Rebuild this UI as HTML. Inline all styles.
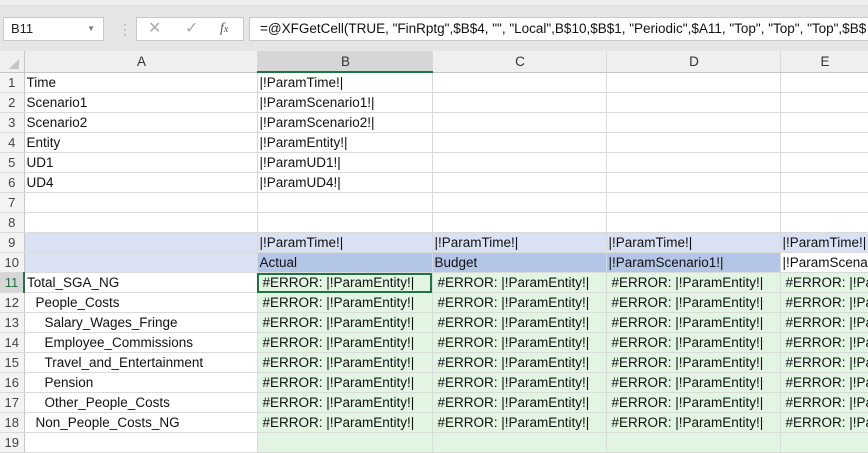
<!DOCTYPE html>
<html><head><meta charset="utf-8"><style>
*{margin:0;padding:0;box-sizing:border-box}
body{width:868px;height:437px;overflow:hidden;background:#fff;font-family:"Liberation Sans",Calibri,sans-serif;position:relative}
.top{position:absolute;left:0;top:0;width:868px;height:51px;background:#e6e6e6}
.strip{position:absolute;left:0;top:0;width:868px;height:6px;background:#f0f0f0;border-bottom:1px solid #dcdcdc}
.box{position:absolute;background:#fff;border:1px solid #c8c8c8;top:17px;height:24px;font-size:13px;line-height:22px;color:#222;overflow:hidden;white-space:nowrap}
table{position:absolute;left:0;top:51px;border-collapse:collapse;table-layout:fixed;width:868px}
td{height:20px;border-right:1px solid #dadada;border-bottom:1px solid #dadada;font-size:13.5px;white-space:nowrap;overflow:hidden;padding:0 0 0 2px;color:#111;line-height:19px}
td.rh{background:#f3f3f3;color:#444;text-align:center;padding:0;font-size:13px;border-right:1px solid #c6c6c6}
tr.ch td{background:#efefef;text-align:center;color:#333;height:21px;border-bottom:1px solid #c6c6c6}
tr.ch td.sel{background:#d6d6d6;border-bottom:2px solid #217346}
td.rsel{background:#d6d6d6;color:#217346;border-right:2px solid #217346}
.l{background:#d9e1f2}
.d{background:#b4c6e7}
.g{background:#e2f5e2;padding-left:5px}
.cur{outline:2px solid #217346;outline-offset:-2px}
</style></head><body>
<div class="top"><div class="strip"></div>
<div class="box" style="left:3px;width:101px;padding-left:7px">B11<span style="position:absolute;right:8px;top:0;font-size:8px;color:#777">▼</span></div>
<div style="position:absolute;left:118px;top:21px;color:#aaa;font-size:14px">⋮</div>
<div class="box" style="left:136px;width:108px;color:#aaa;font-size:16px"><span style="position:absolute;left:11px">✕</span><span style="position:absolute;left:48px">✓</span><span style="position:absolute;left:83px;font-family:'Liberation Serif',serif;font-style:italic;color:#555;font-size:14px">f<small style="font-size:10px">x</small></span></div>
<div class="box" style="left:249px;width:640px;padding-left:10px;font-size:13.5px;color:#111">=@XFGetCell(TRUE, "FinRptg",$B$4, "", "Local",B$10,$B$1, "Periodic",$A11, "Top", "Top", "Top",$B$</div>
</div>
<table>
<colgroup><col style="width:24px"><col style="width:233px"><col style="width:175px"><col style="width:174px"><col style="width:174px"><col style="width:88px"></colgroup>
<tr class="ch"><td class="rh" style="background:#efefef"><span style="display:block;width:0;height:0;border-left:10px solid transparent;border-bottom:10px solid #c4c4c4;margin:6px 0 0 9px"></span></td><td>A</td><td class="sel">B</td><td>C</td><td>D</td><td>E</td></tr>
<tr><td class="rh">1</td><td>Time</td><td>|!ParamTime!|</td><td></td><td></td><td></td></tr>
<tr><td class="rh">2</td><td>Scenario1</td><td>|!ParamScenario1!|</td><td></td><td></td><td></td></tr>
<tr><td class="rh">3</td><td>Scenario2</td><td>|!ParamScenario2!|</td><td></td><td></td><td></td></tr>
<tr><td class="rh">4</td><td>Entity</td><td>|!ParamEntity!|</td><td></td><td></td><td></td></tr>
<tr><td class="rh">5</td><td>UD1</td><td>|!ParamUD1!|</td><td></td><td></td><td></td></tr>
<tr><td class="rh">6</td><td>UD4</td><td>|!ParamUD4!|</td><td></td><td></td><td></td></tr>
<tr><td class="rh">7</td><td></td><td></td><td></td><td></td><td></td></tr>
<tr><td class="rh">8</td><td></td><td></td><td></td><td></td><td></td></tr>
<tr><td class="rh">9</td><td class="l"></td><td class="l">|!ParamTime!|</td><td class="l">|!ParamTime!|</td><td class="l">|!ParamTime!|</td><td class="l">|!ParamTime!|</td></tr>
<tr><td class="rh">10</td><td class="l"></td><td class="d">Actual</td><td class="d">Budget</td><td class="d">|!ParamScenario1!|</td><td>|!ParamScenario1!|</td></tr>
<tr><td class="rh rsel">11</td><td>Total_SGA_NG</td><td class="g cur">#ERROR: |!ParamEntity!|</td><td class="g">#ERROR: |!ParamEntity!|</td><td class="g">#ERROR: |!ParamEntity!|</td><td class="g">#ERROR: |!ParamEntity!|</td></tr>
<tr><td class="rh">12</td><td style="padding-left:11px">People_Costs</td><td class="g">#ERROR: |!ParamEntity!|</td><td class="g">#ERROR: |!ParamEntity!|</td><td class="g">#ERROR: |!ParamEntity!|</td><td class="g">#ERROR: |!ParamEntity!|</td></tr>
<tr><td class="rh">13</td><td style="padding-left:20px">Salary_Wages_Fringe</td><td class="g">#ERROR: |!ParamEntity!|</td><td class="g">#ERROR: |!ParamEntity!|</td><td class="g">#ERROR: |!ParamEntity!|</td><td class="g">#ERROR: |!ParamEntity!|</td></tr>
<tr><td class="rh">14</td><td style="padding-left:20px">Employee_Commissions</td><td class="g">#ERROR: |!ParamEntity!|</td><td class="g">#ERROR: |!ParamEntity!|</td><td class="g">#ERROR: |!ParamEntity!|</td><td class="g">#ERROR: |!ParamEntity!|</td></tr>
<tr><td class="rh">15</td><td style="padding-left:20px">Travel_and_Entertainment</td><td class="g">#ERROR: |!ParamEntity!|</td><td class="g">#ERROR: |!ParamEntity!|</td><td class="g">#ERROR: |!ParamEntity!|</td><td class="g">#ERROR: |!ParamEntity!|</td></tr>
<tr><td class="rh">16</td><td style="padding-left:20px">Pension</td><td class="g">#ERROR: |!ParamEntity!|</td><td class="g">#ERROR: |!ParamEntity!|</td><td class="g">#ERROR: |!ParamEntity!|</td><td class="g">#ERROR: |!ParamEntity!|</td></tr>
<tr><td class="rh">17</td><td style="padding-left:20px">Other_People_Costs</td><td class="g">#ERROR: |!ParamEntity!|</td><td class="g">#ERROR: |!ParamEntity!|</td><td class="g">#ERROR: |!ParamEntity!|</td><td class="g">#ERROR: |!ParamEntity!|</td></tr>
<tr><td class="rh">18</td><td style="padding-left:11px">Non_People_Costs_NG</td><td class="g">#ERROR: |!ParamEntity!|</td><td class="g">#ERROR: |!ParamEntity!|</td><td class="g">#ERROR: |!ParamEntity!|</td><td class="g">#ERROR: |!ParamEntity!|</td></tr>
<tr><td class="rh">19</td><td></td><td class="g"></td><td class="g"></td><td class="g"></td><td class="g"></td></tr>
</table>
</body></html>
